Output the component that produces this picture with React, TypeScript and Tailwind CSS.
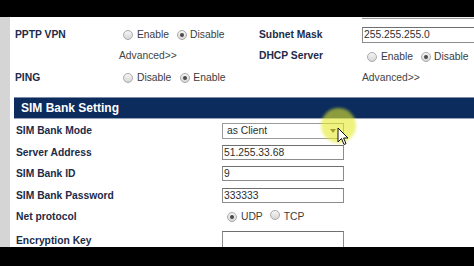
function Radio({ checked }: { checked?: boolean }) {
  return (
    <span className="relative inline-flex h-[10px] w-[10px] shrink-0 items-center justify-center rounded-full border border-[#a9a9a9] bg-gradient-to-b from-[#f6f6f6] to-[#d6d6d6]">
      {checked && <span className="h-[4px] w-[4px] rounded-full bg-[#4a4a4a]" />}
    </span>
  );
}

function RadioPair({
  a,
  b,
  checked,
  gap = "ml-[8px]",
}: {
  a: string;
  b: string;
  checked: "a" | "b";
  gap?: string;
}) {
  return (
    <div className="flex items-center text-[10.3px] text-[#3c3c3c]">
      <Radio checked={checked === "a"} />
      <span className="ml-[4px]">{a}</span>
      <span className={`flex items-center ${gap}`}>
        <Radio checked={checked === "b"} />
        <span className="ml-[3px]">{b}</span>
      </span>
    </div>
  );
}

function TextBox({ value, h = "h-[15px]" }: { value?: string; h?: string }) {
  return (
    <div
      className={`flex w-[122px] items-center border border-[#8c8c8c] border-t-[#6f6f6f] bg-white pl-[1px] text-[10.3px] text-[#2e2e2e] ${h}`}
    >
      {value}
    </div>
  );
}

const label = "text-[10.3px] font-bold text-[#1d2b48]";

function LowerRow({ name, children }: { name: string; children: React.ReactNode }) {
  return (
    <div className="flex h-[21.6px] shrink-0 items-center">
      <div className={`w-[212px] pl-[6px] ${label}`}>{name}</div>
      <div className="flex items-center">{children}</div>
    </div>
  );
}

function Cursor() {
  return (
    <svg width="12" height="19" viewBox="0 0 12 19" className="absolute left-[327px] top-[110px]">
      <path
        d="M1 1 L1 15 L4.5 11.5 L7 17.5 L9 16.6 L6.6 11 L11 11 Z"
        fill="#ffffff"
        stroke="#111111"
        strokeWidth="1"
        strokeLinejoin="round"
      />
    </svg>
  );
}

export default function App() {
  return (
    <div
      className="flex h-[266px] w-[474px] flex-col overflow-hidden bg-black"
      style={{ fontFamily: '"Liberation Sans", Arial, sans-serif' }}
    >
      <div className="h-[17px] shrink-0 bg-black" />

      <div className="flex h-[230px] shrink-0">
        <div className="w-[10px] shrink-0 bg-[#d5d5d5]" />

        <div className="relative flex flex-1 flex-col overflow-hidden bg-white">
          {/* bottom edge of the field above */}
          <div className="flex h-[7px] shrink-0">
            <div className="ml-[352px] h-[2px] flex-1 border-b border-[#9a9a9a] bg-[#f2f2f2]" />
          </div>

          {/* upper settings table */}
          <div className="flex h-[21px] shrink-0 items-center">
            <div className={`w-[109px] pl-[5px] ${label}`}>PPTP VPN</div>
            <div className="w-[140px] pl-[4px]">
              <RadioPair a="Enable" b="Disable" checked="b" />
            </div>
            <div className={`w-[103px] ${label}`}>Subnet Mask</div>
            <div className="flex h-[16px] flex-1 items-center border border-[#8c8c8c] border-r-0 border-t-[#6f6f6f] pl-[1px] text-[10.3px] text-[#2e2e2e]">
              255.255.255.0
            </div>
          </div>

          <div className="flex h-[22px] shrink-0 items-center">
            <div className="w-[109px]" />
            <div className="w-[140px] text-[10.3px] text-[#444]">Advanced&gt;&gt;</div>
            <div className={`w-[103px] ${label}`}>DHCP Server</div>
            <div className="pl-[5px] pt-[2px]">
              <RadioPair a="Enable" b="Disable" checked="b" />
            </div>
          </div>

          <div className="flex h-[22px] shrink-0 items-center">
            <div className={`w-[109px] pl-[5px] ${label}`}>PING</div>
            <div className="w-[140px] pl-[4px]">
              <RadioPair a="Disable" b="Enable" checked="b" gap="ml-[9px]" />
            </div>
            <div className="w-[103px]" />
            <div className="text-[10.3px] text-[#444]">Advanced&gt;&gt;</div>
          </div>

          <div className="h-[8px] shrink-0" />

          {/* section header */}
          <div className="ml-[4px] flex h-[22px] shrink-0 items-center border-y border-t-[#7d8ca6] border-b-[#98a4b8] bg-[#0b2c5c] pl-[7px] text-[12px] font-bold text-white">
            SIM Bank Setting
          </div>

          <div className="h-[1px] shrink-0" />

          <LowerRow name="SIM Bank Mode">
            <div className="relative flex h-[16px] w-[122px] items-center border border-[#9a9a9a] bg-white pl-[4px] text-[10.3px] text-[#2e2e2e]">
              as Client
              <span className="absolute right-[7px] top-[5px] h-0 w-0 border-x-[3px] border-t-[4px] border-x-transparent border-t-[#333]" />
            </div>
          </LowerRow>
          <LowerRow name="Server Address">
            <TextBox value="51.255.33.68" />
          </LowerRow>
          <LowerRow name="SIM Bank ID">
            <TextBox value="9" />
          </LowerRow>
          <LowerRow name="SIM Bank Password">
            <TextBox value="333333" />
          </LowerRow>
          <LowerRow name="Net protocol">
            <div className="flex items-center pl-[5px] text-[10.3px] text-[#3c3c3c]">
              <Radio checked />
              <span className="ml-[4px]">UDP</span>
              <span className="ml-[7px]">
                <Radio />
              </span>
              <span className="ml-[4px]">TCP</span>
            </div>
          </LowerRow>
          <div className="flex h-[21.6px] shrink-0 items-start pt-[3px]">
            <div className={`w-[212px] pl-[6px] pt-[2px] ${label}`}>Encryption Key</div>
            <TextBox h="h-[18px]" />
          </div>

          {/* cursor highlight */}
          <div className="absolute left-[311px] top-[91px] h-[35px] w-[35px] rounded-full bg-[#e4ea2a]/60 blur-[1.5px]" />
          <Cursor />
        </div>
      </div>

      <div className="flex-1 bg-black" />
    </div>
  );
}
